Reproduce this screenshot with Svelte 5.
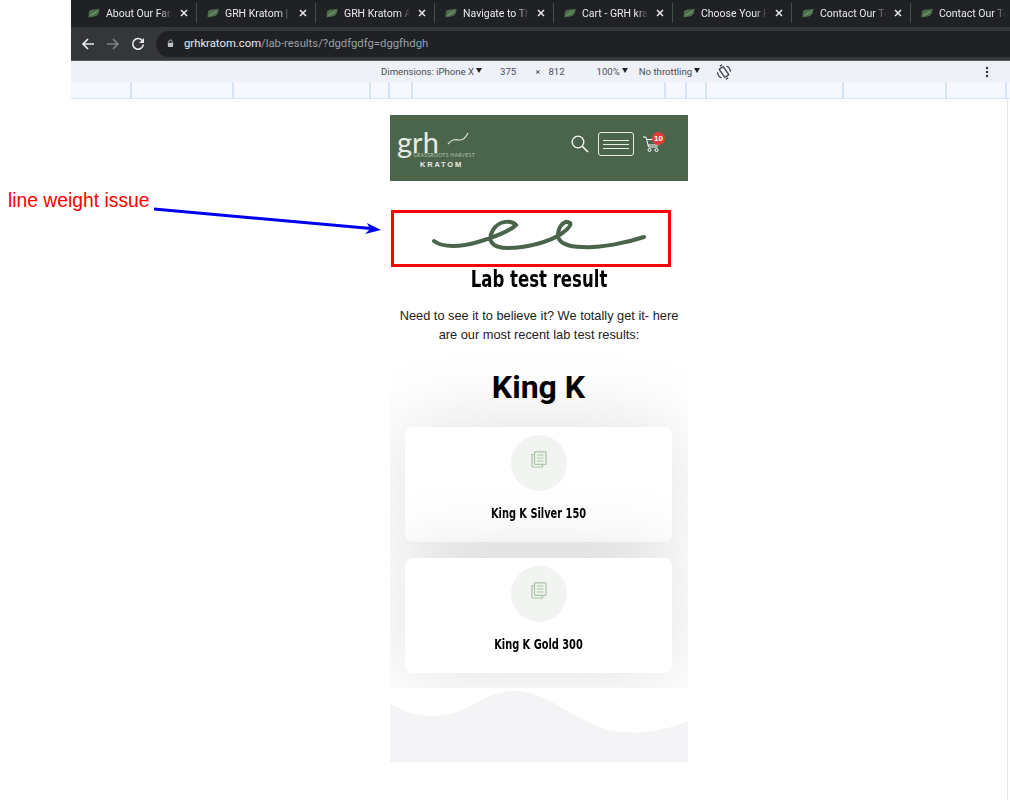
<script>
  const tabs = ['About Our Farm', 'GRH Kratom | Kratom', 'GRH Kratom Affiliate', 'Navigate to The', 'Cart - GRH kratom', 'Choose Your Perfect', 'Contact Our Team', 'Contact Our Team'];
  const cells = [61, 102, 137, 19, 23, 253, 21, 20, 137, 103, 60];
  const products = ['King K Silver 150', 'King K Gold 300'];
</script>

<div class="shot">
  <div class="browser">
    <div class="tabs">
      {#each tabs as t}
        <div class="tab">
          <svg class="leaf" viewBox="0 0 12 10" width="12" height="10"><path d="M1.500 2.500C4 1.500 8 1.500 11.500 .8 11.500 5 10 8 6 8.500 4 8.800 2 9 .5 9.500 .5 7 .8 4.500 1.500 2.500z" fill="#4c6e4b"/><path d="M2.500 7.500C5 6.500 7 4.500 9.500 3" stroke="#9db895" stroke-width=".7" fill="none"/></svg>
          <span class="tab-title">{t}</span>
          <svg class="tab-x" viewBox="0 0 8 8" width="8" height="8"><path d="M1 1l6 6M7 1L1 7" stroke="#e8eaed" stroke-width="1.500"/></svg>
        </div>
      {/each}
    </div>
    <div class="toolbar">
      <svg viewBox="0 0 14 14" width="14" height="14"><path d="M13 7H2M7 2L2 7l5 5" stroke="#e8eaed" stroke-width="1.700" fill="none"/></svg>
      <svg viewBox="0 0 14 14" width="14" height="14"><path d="M1 7h11M7 2l5 5-5 5" stroke="#7f8185" stroke-width="1.700" fill="none"/></svg>
      <svg viewBox="0 0 14 14" width="14" height="14"><path d="M11.500 4A5.300 5.300 0 1 0 12.300 7.500" stroke="#e8eaed" stroke-width="1.600" fill="none"/><path d="M13 1v5H8z" fill="#e8eaed"/></svg>
      <div class="omnibox">
        <svg viewBox="0 0 8 10" width="7" height="9"><path d="M2 4V3a2 2 0 0 1 4 0v1" stroke="#bdc1c6" fill="none"/><rect x="1" y="4" width="6" height="5" rx=".8" fill="#bdc1c6"/></svg>
        <span class="url"><b>grhkratom.com</b>/lab-results/?dgdfgdfg=dggfhdgh</span>
      </div>
    </div>
    <div class="device">
      <span class="d1">Dimensions: iPhone X<i class="caret"></i></span>
      <span class="d2">375</span>
      <span class="d3">×</span>
      <span class="d4">812</span>
      <span class="d5">100%<i class="caret"></i></span>
      <span class="d6">No throttling<i class="caret"></i></span>
      <svg class="rotate" viewBox="0 0 16 16" width="16" height="16">
        <g transform="rotate(-35 8 8)" fill="none" stroke="#3c4043" stroke-width="1.300"><rect x="5.500" y="3" width="5" height="10" rx=".8"/><path d="M2.500 4.500A7 7 0 0 0 2.500 11.500M13.500 4.500A7 7 0 0 1 13.500 11.500"/><path d="M8 .8h2.500M5.500 15.200H8"/></g>
      </svg>
      <svg class="kebab" viewBox="0 0 4 12" width="4" height="12"><circle cx="2" cy="2" r="1.200"/><circle cx="2" cy="6" r="1.200"/><circle cx="2" cy="10" r="1.200"/></svg>
    </div>
    <div class="media">
      {#each cells as c}
        <div class="cell" style="width:{c}px"></div>
      {/each}
    </div>
  </div>

  <div class="viewport">
    <main class="phone">
      <header class="site">
        <div class="logo">
          <div class="grh">grh</div>
          <svg class="swirl" viewBox="0 0 22 14" width="22" height="14"><path d="M1 12C6 6 9 8 13 8 16 8 19 5 21 1" stroke="#dfe6dc" stroke-width="1.200" fill="none"/></svg>
          <div class="grass">GRASSROOTS HARVEST</div>
          <div class="kratom">KRATOM</div>
        </div>
        <div class="actions">
          <svg viewBox="0 0 18 18" width="18" height="18"><circle cx="7" cy="7" r="5.800" fill="none" stroke="#fff" stroke-width="1.300"/><path d="M11.200 11.200L17 17" stroke="#fff" stroke-width="1.500"/></svg>
          <div class="burger"><i></i><i></i><i></i></div>
          <div class="cart">
            <svg viewBox="0 0 18 18" width="18" height="18" fill="none" stroke="#fff" stroke-width="1"><path d="M0 2h3l2.500 10h9"/><path d="M3.500 4.500H17l-1.500 5.500H5"/><circle cx="6.500" cy="15" r="1.500"/><circle cx="13.500" cy="15" r="1.500"/></svg>
            <span class="badge">10</span>
          </div>
        </div>
      </header>

      <div class="squiggle">
        <svg viewBox="0 0 274 51" width="274" height="51">
          <path d="M40 28C49 35 67 34 84 29 97 25 115 19 122 12 118 7 105 7 99 17 93 27 97 35 114 35 132 35 155 29 167 21 173 17 178 12 176 10 172 7 165 11 164 21 163 30 175 34 188 34 207 35 232 30 250 24" fill="none" stroke="#4a654b" stroke-width="4" stroke-linecap="round"/>
        </svg>
      </div>

      <h1>Lab test result</h1>
      <p>Need to see it to believe it? We totally get it- here are our most recent lab test results:</p>

      <section class="results">
        <h2>King K</h2>
        <div class="cards">
          {#each products as name}
            <article class="card">
              <div class="circle">
                <svg viewBox="0 0 16 17" width="16" height="17" fill="none" stroke="#a9c3a6" stroke-width="1.200"><rect x="3.500" y=".8" width="11.500" height="12.500" rx=".8"/><path d="M3.500 3.500H1v11.500c0 .6.400 1 1 1h9.500v-2.700"/><path d="M6 4h6.500M6 7h6.500M6 10h6.500"/></svg>
              </div>
              <h3>{name}</h3>
            </article>
          {/each}
        </div>
      </section>

      <div class="wave">
        <svg viewBox="0 0 298 74" width="298" height="74"><path d="M0 0H298V33C270 44 250 47 225 43 185 36 160 3 125 3 90 3 80 29 40 28 22 28 10 21 0 15Z" fill="#fff"/></svg>
      </div>
    </main>
  </div>

  <div class="note">line weight issue</div>
  <svg class="arrow" viewBox="0 0 240 30" width="240" height="30">
    <path d="M3 4L220 23.500" stroke="#0000f0" stroke-width="3"/>
    <path d="M216 18L230 25 214 29 219 24z" fill="#0000f0"/>
  </svg>
</div>

<style>
  :global(body) { margin: 0; background: #fff; }
  .shot { position: relative; width: 1010px; height: 800px; overflow: hidden; background: #fff; font-family: "Liberation Sans", sans-serif; }

  .browser { margin-left: 71px; font-family: "Roboto", "Liberation Sans", sans-serif; }
  .tabs { display: flex; height: 27px; padding-left: 7px; background: #202124; overflow: hidden; }
  .tab { flex: 0 0 119px; box-sizing: border-box; display: flex; align-items: center; padding-left: 10px; height: 20px; margin-top: 3px; border-right: 1px solid #4a4c50; color: #e8eaed; font-size: 10.500px; }
  .tab:last-child { border-right: 0; }
  .leaf { flex: none; }
  .tab-title { width: 66px; margin-left: 6px; white-space: nowrap; overflow: hidden; -webkit-mask-image: linear-gradient(90deg, #000 82%, transparent 100%); mask-image: linear-gradient(90deg, #000 82%, transparent 100%); }
  .tab-x { margin-left: 8px; flex: none; }

  .toolbar { display: flex; align-items: center; gap: 11px; height: 33px; padding-left: 10px; background: #35363a; border-bottom: 1px solid #57585c; }
  .omnibox { flex: 1; display: flex; align-items: center; gap: 10px; height: 26px; padding-left: 11px; background: #202124; border-radius: 13px 0 0 13px; }
  .url { color: #9aa0a6; font-size: 11.300px; white-space: nowrap; }
  .url b { color: #e8eaed; font-weight: 400; }

  .device { display: flex; align-items: center; height: 21px; background: #eef1f8; color: #4a4d52; font-size: 9.600px; white-space: nowrap; }
  .caret { display: inline-block; margin-left: 2px; vertical-align: 2px; border: 3.500px solid transparent; border-top: 5px solid #222; border-bottom: 0; }
  .d1 { margin-left: 310px; }
  .d2 { margin-left: 18px; }
  .d3 { margin-left: 19px; }
  .d4 { margin-left: 8px; }
  .d5 { margin-left: 32px; }
  .d6 { margin-left: 11px; }
  .rotate { margin-left: 16px; }
  .kebab { margin-left: 253px; fill: #333; }

  .media { display: flex; height: 16px; background: #f6f8fe; border-bottom: 1px solid #d6e4fb; }
  .cell { box-sizing: border-box; height: 100%; border-right: 2px solid #d6e4fb; }

  .viewport { height: 701px; margin-right: 2px; border-right: 1px solid #e6e6e6; }
  .phone { width: 298px; margin-left: 390px; padding-top: 16px; }

  .site { display: flex; justify-content: space-between; align-items: center; box-sizing: border-box; height: 66px; padding: 0 27px 12px 7px; background: #4a654b; }
  .logo { position: relative; width: 78px; height: 50px; color: #e6ece3; }
  .grh { font: 400 29px/34px "Lato", sans-serif; margin-top: 8px; }
  .swirl { position: absolute; left: 50px; top: 15px; }
  .grass { font: 400 5px/6px "Lato", sans-serif; letter-spacing: .35px; margin-left: 16px; margin-top: -7px; white-space: nowrap; color: #b9c7b5; }
  .kratom { font: 700 7.500px/9px "Liberation Sans", sans-serif; letter-spacing: 1.800px; margin-left: 23px; margin-top: 1.500px; }
  .actions { display: flex; align-items: center; gap: 9px; margin-top: 4px; }
  .burger { display: flex; flex-direction: column; justify-content: center; gap: 3px; box-sizing: border-box; width: 36px; height: 24px; padding: 0 4px; border: 1px solid #e7ece6; border-radius: 3px; }
  .burger i { display: block; height: 1px; background: #e7ece6; }
  .cart { position: relative; width: 18px; height: 18px; }
  .badge { position: absolute; left: 9px; top: -3px; width: 13px; height: 13px; border-radius: 50%; background: #e53935; color: #fff; font: 700 8px/13px "Liberation Sans", sans-serif; text-align: center; }

  .squiggle { box-sizing: border-box; width: 280px; height: 57px; margin: 29px 0 0 1px; border: 3px solid #f00; }
  .squiggle svg { display: block; }

  h1 { margin: 0; height: 24px; font: 700 23px/24px "DejaVu Sans Condensed", "DejaVu Sans", sans-serif; text-align: center; color: #000; transform: scaleX(.8); }
  p { margin: 15px 0 0; padding: 0 8px; font-size: 12.800px; line-height: 19px; color: #222; text-align: center; }

  .results { box-sizing: border-box; height: 333px; margin-top: 11px; padding: 10px 16px 0 15px; overflow: hidden; }
  h2 { margin: 0 0 18px; font: 700 32px/44px "Roboto", sans-serif; text-align: center; color: #000; }
  .cards { display: flex; flex-direction: column; gap: 16px; }
  .card { height: 115px; padding-top: 8px; box-sizing: border-box; border-radius: 8px; background: #fff; box-shadow: 0 0 80px rgba(0, 0, 0, .13); text-align: center; }
  .circle { display: flex; align-items: center; justify-content: center; width: 56px; height: 56px; margin: 0 auto; border-radius: 50%; background: #f1f4f0; }
  .circle svg { margin-top: -8px; }
  h3 { margin: 12px 0 0; font: 700 14px/20px "DejaVu Sans Condensed", "DejaVu Sans", sans-serif; color: #000; transform: scaleX(.78); }

  .wave { height: 74px; background: #f4f4f6; }
  .wave svg { display: block; }

  .note { position: absolute; left: 8px; top: 190px; color: #f00; font-size: 19.300px; line-height: 22px; white-space: nowrap; }
  .arrow { position: absolute; left: 151px; top: 205px; overflow: visible; }
</style>
